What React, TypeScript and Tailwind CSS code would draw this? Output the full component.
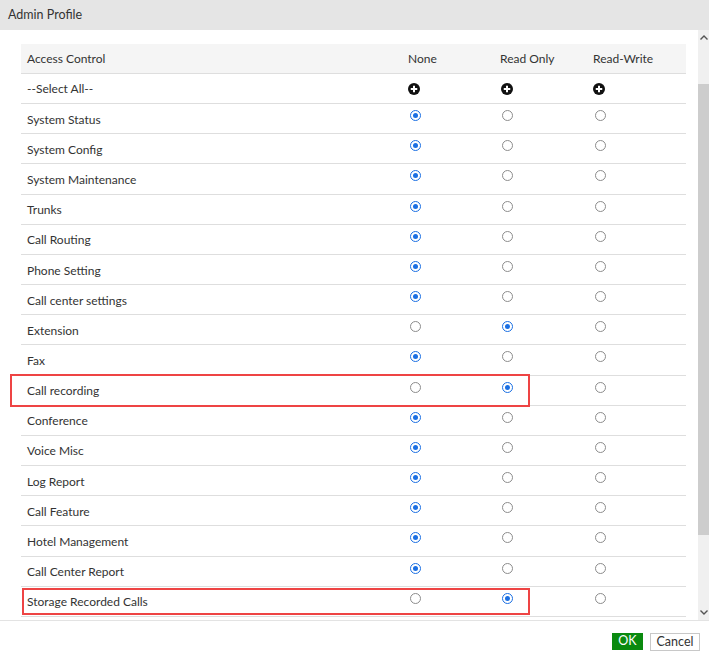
import React from "react";

const rows: [string, number][] = [
  ["System Status", 0],
  ["System Config", 0],
  ["System Maintenance", 0],
  ["Trunks", 0],
  ["Call Routing", 0],
  ["Phone Setting", 0],
  ["Call center settings", 0],
  ["Extension", 1],
  ["Fax", 0],
  ["Call recording", 1],
  ["Conference", 0],
  ["Voice Misc", 0],
  ["Log Report", 0],
  ["Call Feature", 0],
  ["Hotel Management", 0],
  ["Call Center Report", 0],
  ["Storage Recorded Calls", 1],
];

function Radio({ checked }: { checked: boolean }) {
  return checked ? (
    <div className="w-[11px] h-[11px] rounded-full border-[1.5px] border-[#1a6fe3] bg-white flex items-center justify-center">
      <div className="w-[5px] h-[5px] rounded-full bg-[#1a6fe3]" />
    </div>
  ) : (
    <div className="w-[11px] h-[11px] rounded-full border border-[#8c8c8c] bg-white" />
  );
}

function Plus() {
  return (
    <svg width="12" height="12" viewBox="0 0 12 12">
      <circle cx="6" cy="6" r="6" fill="#111" />
      <rect x="2.75" y="5" width="6.5" height="2" fill="#fff" />
      <rect x="5" y="2.75" width="2" height="6.5" fill="#fff" />
    </svg>
  );
}

const cols = "grid grid-cols-[381px_92px_93px_99px]";

export default function App() {
  return (
    <div
      className="relative w-[709px] h-[658px] bg-white text-[12px] text-[#333] overflow-hidden"
      style={{ fontFamily: "Lato, 'Open Sans', sans-serif" }}
    >
      <div className="h-[30px] bg-[#e5e5e5] flex items-center pl-[8px] text-[12.5px] text-[#333]">
        Admin Profile
      </div>
      <div className="flex h-[590px]">
        <div className="flex-1 overflow-hidden pt-[14px] pl-[21px]">
          <div className="w-[665px]">
            <div className={`${cols} h-[30px] bg-[#f5f5f5] border-b border-[#dedede] items-center`}>
              <div className="pl-[6px]">Access Control</div>
              <div className="pl-[6px]">None</div>
              <div className="pl-[6px]">Read Only</div>
              <div className="pl-[6px]">Read-Write</div>
            </div>
            <div className={`${cols} h-[30.17px] border-b border-[#dedede] items-center`}>
              <div className="pl-[6px]">--Select All--</div>
              <div className="pl-[6px] flex"><Plus /></div>
              <div className="pl-[7px] flex"><Plus /></div>
              <div className="pl-[6px] flex"><Plus /></div>
            </div>
            {rows.map(([name, sel]) => (
              <div key={name} className={`${cols} h-[30.17px] border-b border-[#dedede]`}>
                <div className="pl-[6px] flex items-center pt-[2px]">{name}</div>
                {[0, 1, 2].map((i) => (
                  <div key={i} className="pl-[8px] pt-[6px]">
                    <Radio checked={sel === i} />
                  </div>
                ))}
              </div>
            ))}
          </div>
        </div>
        <div className="w-[11px] bg-[#f0f0f0] flex flex-col items-center">
          <div className="h-[54px] w-full flex justify-center pt-[5px]">
            <svg width="8" height="5" viewBox="0 0 8 5">
              <path d="M0.5 4.5 L4 1 L7.5 4.5" stroke="#555" strokeWidth="1.4" fill="none" />
            </svg>
          </div>
          <div className="h-[451px] w-full bg-[#cdcdcd]" />
          <div className="flex-1 w-full flex items-end justify-center pb-[5px]">
            <svg width="8" height="5" viewBox="0 0 8 5">
              <path d="M0.5 0.5 L4 4 L7.5 0.5" stroke="#555" strokeWidth="1.4" fill="none" />
            </svg>
          </div>
        </div>
      </div>
      <div className="h-[38px] border-t border-[#e3e3e3] flex items-start justify-end pt-[12px] pr-[9px] gap-[7px]">
        <button className="h-[17px] w-[31px] bg-[#0a8a0f] text-white text-[12.5px] leading-none flex items-center justify-center">
          OK
        </button>
        <button className="h-[18px] w-[50px] bg-white border border-[#c8c8c8] text-[#333] text-[12.5px] leading-none flex items-center justify-center">
          Cancel
        </button>
      </div>
      <div className="absolute left-[10px] top-[374px] w-[520px] h-[33px] border-2 border-[#ee4444]" />
      <div className="absolute left-[22px] top-[588px] w-[508px] h-[27px] border-2 border-[#ee4444]" />
    </div>
  );
}
